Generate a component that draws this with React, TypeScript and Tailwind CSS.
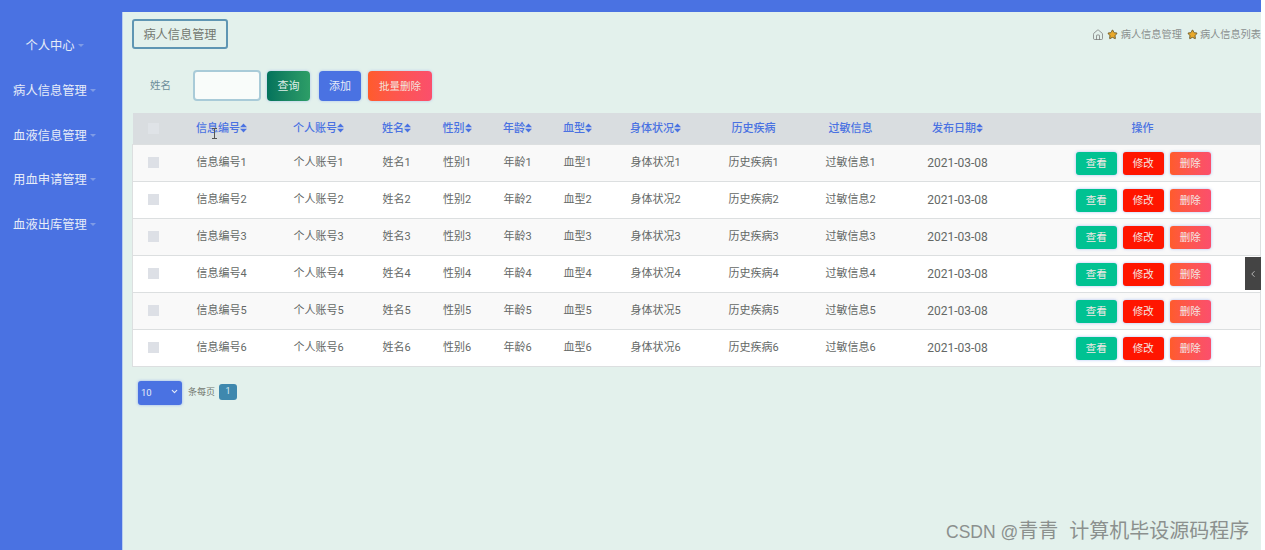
import React from 'react';
import { ChevronDown, ChevronLeft, Home, Star } from 'lucide-react';

const menus = ['个人中心', '病人信息管理', '血液信息管理', '用血申请管理', '血液出库管理'];

const columns = [
    { label: '信息编号', sort: true, w: 'w-[96px]' },
    { label: '个人账号', sort: true, w: 'w-[98px]' },
    { label: '姓名', sort: true, w: 'w-[58px]' },
    { label: '性别', sort: true, w: 'w-[63px]' },
    { label: '年龄', sort: true, w: 'w-[58px]' },
    { label: '血型', sort: true, w: 'w-[62px]' },
    { label: '身体状况', sort: true, w: 'w-[94px]' },
    { label: '历史疾病', sort: false, w: 'w-[102px]' },
    { label: '过敏信息', sort: false, w: 'w-[92px]' },
    { label: '发布日期', sort: true, w: 'w-[122px]' },
];

const rows = [1, 2, 3, 4, 5, 6];

const SortIcon = () => (
    <svg width="7" height="10" viewBox="0 0 7 10" className="inline-block align-[-1px]" fill="currentColor">
        <path d="M3.5 0.5 L7 4.3 H0 Z" />
        <path d="M3.5 9.5 L7 5.7 H0 Z" />
    </svg>
);

const Breadcrumb = () => (
    <div className="flex items-center text-[10.2px] text-[#8a8f8e] whitespace-nowrap overflow-hidden pt-[1px]">
        <Home size={12} strokeWidth={1.5} className="mr-[3px] shrink-0 text-[#777]" />
        <Star size={11} className="mr-[3px] shrink-0 fill-[#e9a92b] text-[#6b5a2a]" />
        <span className="mr-[5px]">病人信息管理</span>
        <Star size={11} className="mr-[2px] shrink-0 fill-[#e9a92b] text-[#6b5a2a]" />
        <span>病人信息列表</span>
    </div>
);

const RowButton = ({ label, className }: { label: string; className: string }) => (
    <button className={`w-[41px] h-[23px] rounded-[3px] pt-[1px] text-[10.5px] text-[#f3e9e6] shadow-[0_0_3px_rgba(90,130,240,0.5)] ${className}`}>
        {label}
    </button>
);

export default function App() {
    return (
        <div className="w-[1265px] h-[550px] overflow-hidden bg-white font-['Roboto','Noto_Sans_CJK_SC',sans-serif] relative">
            <div className="w-[1261px] h-full flex flex-col">
                <div className="h-[12px] shrink-0 bg-[#4a72e2]" />
                <div className="flex flex-1 min-h-0">
                    {/* Sidebar */}
                    <aside className="w-[123px] shrink-0 bg-[#4a72e2] pt-[12px] border-r border-[#b9cdf0]">
                        {menus.map((m) => (
                            <div key={m} className="h-[44.7px] flex items-center justify-center pr-[13px] text-[12.3px] text-[#e6ecf8]">
                                <span>{m}</span>
                                <span className="ml-[3px] mb-[1px] w-0 h-0 border-x-[3px] border-x-transparent border-t-[3px] border-t-[#7f9be6]" />
                            </div>
                        ))}
                    </aside>

                    {/* Main */}
                    <main className="flex-1 min-w-0 bg-[#e3f1ec] pl-[9px] pt-[7px]">
                        <div className="flex items-start justify-between">
                            <div className="w-[96px] h-[30px] flex items-center justify-center pt-[2px] rounded-[3px] border-2 border-[#5f96b3] text-[12.2px] text-[#72776f]">
                                病人信息管理
                            </div>
                            <div className="mt-[7px]"><Breadcrumb /></div>
                        </div>

                        {/* Search */}
                        <div className="flex items-center h-[31px] mt-[21px]">
                            <span className="w-[61px] pl-[18px] pt-[1px] text-[10.5px] text-[#6c8d9a]">姓名</span>
                            <input className="w-[68px] h-[31px] rounded-[4px] border-2 border-[#a9cbd8] bg-[#f9fcfa] outline-none" />
                            <button className="ml-[6px] w-[43px] h-[30px] rounded-[4px] pt-[3px] text-[11px] text-[#dfeee8] bg-gradient-to-r from-[#03735c] to-[#2d9e67] shadow-[0_0_3px_rgba(90,130,240,0.4)]">查询</button>
                            <button className="ml-[9px] w-[42px] h-[30px] rounded-[4px] pt-[3px] text-[11px] text-[#e6ecf8] bg-[#4a72e2] shadow-[0_0_3px_rgba(90,130,240,0.4)]">添加</button>
                            <button className="ml-[7px] w-[64px] h-[30px] rounded-[4px] pt-[3px] text-[10.5px] text-[#f3e3dd] bg-gradient-to-r from-[#ff5b2b] to-[#fb4f6c] shadow-[0_0_3px_rgba(90,130,240,0.4)]">批量删除</button>
                        </div>

                        {/* Table */}
                        <table className="mt-[12px] w-[1129px] table-fixed border-collapse text-[11px] text-[#646866]">
                            <thead>
                                <tr className="h-[31px] bg-[#d9dde0] text-[#4a72e2]">
                                    <th className="w-[41px] font-normal">
                                        <span className="block mx-auto w-[11px] h-[11px] bg-[#dfe3e7]" />
                                    </th>
                                    {columns.map((c) => (
                                        <th key={c.label} className={`${c.w} font-medium pt-[2px]`}>
                                            {c.label}
                                            {c.sort && <SortIcon />}
                                        </th>
                                    ))}
                                    <th className="font-medium pl-[6px] pt-[2px]">操作</th>
                                </tr>
                            </thead>
                            <tbody className="border border-[#dcdfe0]">
                                {rows.map((n) => (
                                    <tr key={n} className={`h-[37px] border-b border-[#dcdfe0] text-center ${n % 2 === 0 ? 'bg-white' : 'bg-[#f9f9f9]'}`}>
                                        <td>
                                            <span className="block mx-auto w-[11px] h-[11px] bg-[#dde0e6]" />
                                        </td>
                                        <td className="pt-[2px]">信息编号{n}</td>
                                        <td className="pt-[2px]">个人账号{n}</td>
                                        <td className="pt-[2px]">姓名{n}</td>
                                        <td className="pt-[2px]">性别{n}</td>
                                        <td className="pt-[2px]">年龄{n}</td>
                                        <td className="pt-[2px]">血型{n}</td>
                                        <td className="pt-[2px]">身体状况{n}</td>
                                        <td className="pt-[2px]">历史疾病{n}</td>
                                        <td className="pt-[2px]">过敏信息{n}</td>
                                        <td className="text-[12px]">2021-03-08</td>
                                        <td>
                                            <div className="flex justify-center gap-[6px] pl-[8px] pt-[1px]">
                                                <RowButton label="查看" className="bg-[#00c292]" />
                                                <RowButton label="修改" className="bg-[#ff1500]" />
                                                <RowButton label="删除" className="bg-gradient-to-r from-[#ff5b2b] to-[#fb4f6c]" />
                                            </div>
                                        </td>
                                    </tr>
                                ))}
                            </tbody>
                        </table>

                        {/* Pagination */}
                        <div className="flex items-start mt-[12px] ml-[6px]">
                            <div className="relative w-[44px] h-[24px]">
                                <select className="w-full h-full appearance-none rounded-[3px] bg-[#4a72e2] pl-[3px] text-[9.5px] text-[#e6ecf8] outline-none shadow-[0_0_3px_rgba(90,130,240,0.6)]">
                                    <option>10</option>
                                </select>
                                <ChevronDown size={9} strokeWidth={3} className="absolute right-[3px] top-[8px] text-[#e6ecf8]" />
                            </div>
                            <span className="ml-[6px] mt-[5px] leading-[16px] text-[9px] text-[#72776f]">条每页</span>
                            <span className="ml-[4px] mt-[5px] w-[18px] h-[16px] flex items-center justify-center rounded-[3px] bg-[#3f88ae] text-[9px] text-[#dcebf2]">1</span>
                        </div>
                    </main>
                </div>
            </div>

            {/* Text cursor over the header */}
            <svg className="absolute left-[211px] top-[128px]" width="7" height="11" viewBox="0 0 7 11" fill="none" stroke="#555" strokeWidth="1">
                <path d="M1 0.5 H6 M3.5 0.5 V10.5 M1 10.5 H6" />
            </svg>

            {/* Side handle */}
            <div className="absolute left-[1245px] top-[257px] w-[16px] h-[33px] bg-[#444] flex items-center justify-center">
                <ChevronLeft size={10} className="text-[#ccc]" />
            </div>

            {/* Watermark */}
            <div className="absolute left-[946px] top-[519px] text-[20px] leading-[24px] text-[#8b908e] whitespace-nowrap font-['Liberation_Sans','Noto_Sans_CJK_SC',sans-serif]">
                <span className="text-[17.5px]">CSDN @</span>青青&nbsp;&nbsp;计算机毕设源码程序
            </div>
        </div>
    );
}
